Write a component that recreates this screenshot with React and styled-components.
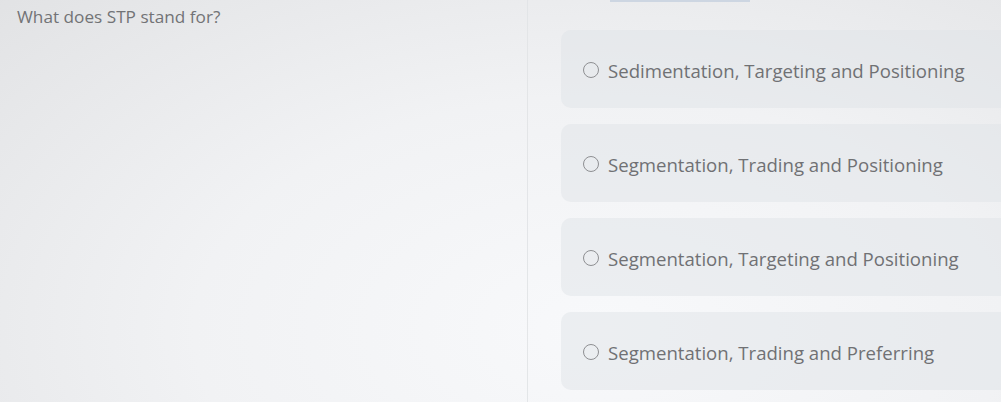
import React from 'react'
import styled, { createGlobalStyle } from 'styled-components'

const GlobalStyle = createGlobalStyle`
  html, body {
    margin: 0;
    padding: 0;
  }
  body {
    font-family: "Open Sans", "Noto Sans", sans-serif;
  }
`

const Page = styled.div`
  width: 1001px;
  height: 402px;
  overflow: hidden;
  display: grid;
  grid-template-columns: 528px 1fr;
  background: radial-gradient(ellipse 900px 520px at 600px 330px, #f8f9fb 0%, #f1f2f4 45%, #dfe0e2 100%);
`

const QuestionPane = styled.div`
  padding: 5px 0 0 17px;
  border-right: 1px solid rgba(225, 227, 230, 0.9);
`

const Question = styled.div`
  font-size: 17.2px;
  color: #727376;
`

const Options = styled.div`
  position: relative;
  display: flex;
  flex-direction: column;
  gap: 16px;
  padding: 30px 0 0 33px;
`

const TopBar = styled.div`
  position: absolute;
  top: 0;
  left: 82px;
  width: 140px;
  height: 2px;
  background: #cdd6e2;
`

const Card = styled.label`
  display: flex;
  align-items: center;
  gap: 9px;
  height: 78px;
  padding: 2px 0 0 22px;
  box-sizing: border-box;
  border-radius: 10px 0 0 10px;
  background: rgba(224, 227, 232, 0.5);
  cursor: pointer;
`

const Radio = styled.span`
  width: 14px;
  height: 14px;
  border-radius: 50%;
  border: 1.6px solid #8e8f92;
  flex-shrink: 0;
`

const OptionText = styled.span`
  font-size: 18.6px;
  color: #707174;
`

const options = [
  'Sedimentation, Targeting and Positioning',
  'Segmentation, Trading and Positioning',
  'Segmentation, Targeting and Positioning',
  'Segmentation, Trading and Preferring',
]

const App = () => {
  return (
    <>
      <GlobalStyle />
      <Page>
        <QuestionPane>
          <Question>What does STP stand for?</Question>
        </QuestionPane>
        <Options>
          <TopBar />
          {options.map(o => (
            <Card key={o}>
              <Radio />
              <OptionText>{o}</OptionText>
            </Card>
          ))}
        </Options>
      </Page>
    </>
  )
}

export default App
